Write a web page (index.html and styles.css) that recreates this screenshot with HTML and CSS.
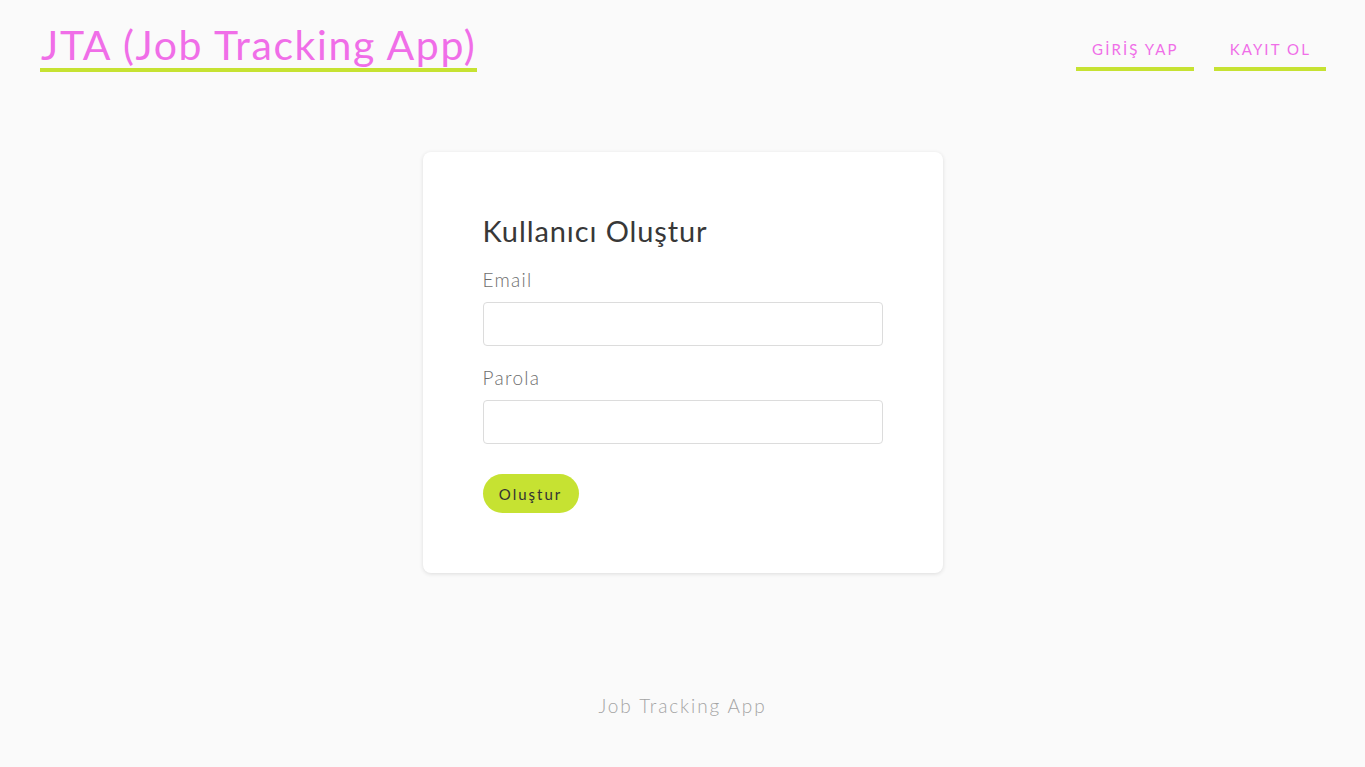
FILE: index.html
```html
<!DOCTYPE html>
<html lang="tr">
<head>
<meta charset="utf-8">
<title>JTA (Job Tracking App)</title>
<link rel="stylesheet" href="styles.css">
</head>
<body>
<header class="topbar">
  <a class="brand" href="#">JTA (Job Tracking App)</a>
  <nav class="nav">
    <a class="nav-link" href="#">GİRİŞ YAP</a>
    <a class="nav-link" href="#">KAYIT OL</a>
  </nav>
</header>
<main class="main">
  <form class="card">
    <h1 class="card-title">Kullanıcı Oluştur</h1>
    <label class="field-label" for="email">Email</label>
    <input class="field-input" id="email" type="email">
    <label class="field-label" for="password">Parola</label>
    <input class="field-input field-last" id="password" type="password">
    <button class="btn" type="button">Oluştur</button>
  </form>
</main>
<footer class="footer">Job Tracking App</footer>
</body>
</html>
```

FILE: styles.css
```css
* { box-sizing: border-box; }
html, body { margin: 0; padding: 0; }
body {
  background: #fafafa;
  font-family: Lato, "Noto Sans", sans-serif;
  color: #333;
  height: 767px;
  display: flex;
  flex-direction: column;
}
.topbar {
  display: flex;
  justify-content: space-between;
  align-items: flex-end;
  padding: 0 39px 0 40px;
  height: 72px;
}
.brand {
  font-size: 41px;
  line-height: 47px;
  color: #f06ee8;
  text-decoration: none;
  border-bottom: 4px solid #c6e232;
  padding: 0 1px;
  letter-spacing: 1.6px;
  font-weight: 400;
}
.nav {
  display: flex;
  gap: 20px;
  margin-bottom: 1px;
}
.nav-link {
  font-size: 15px;
  line-height: 20px;
  letter-spacing: 2.1px;
  color: #f06ee8;
  text-decoration: none;
  padding: 0 15px 8px 16px;
  border-bottom: 4px solid #c6e232;
}
.main {
  display: flex;
  justify-content: center;
  padding-top: 80px;
}
.card {
  width: 520px;
  height: 421px;
  background: #fff;
  border-radius: 8px;
  box-shadow: 0 1px 4px rgba(0,0,0,0.12);
  padding: 60px;
  display: flex;
  flex-direction: column;
  align-items: flex-start;
}
.card-title {
  margin: 0 0 17px;
  font-size: 29px;
  font-weight: 400;
  line-height: 38px;
  letter-spacing: 0.9px;
  color: #383838;
}
.field-label {
  font-size: 19px;
  line-height: 26px;
  font-weight: 300;
  color: #6e6e6e;
  letter-spacing: 1.3px;
  margin: 0 0 9px;
}
.field-input {
  width: 400px;
  height: 44px;
  border: 1px solid #dcdcdc;
  border-radius: 4px;
  background: #fff;
  margin: 0 0 19px;
}
.field-last { margin-bottom: 30px; }
.btn {
  height: 39px;
  width: 96px;
  border: none;
  border-radius: 20px;
  background: #c6e232;
  color: #333;
  font-family: inherit;
  font-size: 15px;
  letter-spacing: 2px;
  padding: 0;
}
.footer {
  margin-top: auto;
  text-align: center;
  font-size: 19px;
  font-weight: 300;
  letter-spacing: 1.9px;
  color: #a4a4a4;
  padding-bottom: 50px;
}
```
